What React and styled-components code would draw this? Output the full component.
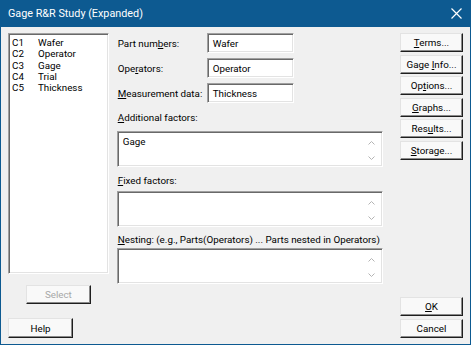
import React from "react";
import styled, { createGlobalStyle } from "styled-components";

const Global = createGlobalStyle`
  html, body {
    margin: 0;
    padding: 0;
    background: #f0f0f0;
  }
  * {
    box-sizing: border-box;
  }
`;

const Window = styled.div`
  width: 471px;
  height: 345px;
  border: 1px solid #0d5a91;
  border-top: none;
  background: #f0f0f0;
  display: flex;
  flex-direction: column;
  font-family: Roboto, "Noto Sans", "Liberation Sans", sans-serif;
  font-size: 9.8px;
  color: #000;
  overflow: hidden;
`;

const TitleBar = styled.div`
  height: 27px;
  margin: 0 -1px;
  background: #0d5a91;
  color: #fff;
  display: flex;
  align-items: center;
  justify-content: space-between;
  padding: 0 9px 0 8px;
  font-size: 10.8px;
`;

const Body = styled.div`
  flex: 1;
  display: flex;
  padding: 6px 7px 6px 7px;
`;

const LeftCol = styled.div`
  width: 101px;
  display: flex;
  flex-direction: column;
`;

const MidCol = styled.div`
  width: 267px;
  margin-left: 8px;
  display: flex;
  flex-direction: column;
`;

const RightCol = styled.div`
  width: 63px;
  margin-left: 17px;
  display: flex;
  flex-direction: column;
  gap: 2.6px;
`;

const Sunken = styled.div`
  background: #fff;
  border: 1px solid;
  border-color: #a0a0a0 #ffffff #ffffff #a0a0a0;
  box-shadow: inset 1px 1px 0 #696969, inset -1px -1px 0 #e3e3e3;
`;

const ListBox = styled(Sunken)`
  height: 241px;
  padding: 3px 0 0 3px;
  line-height: 11.3px;
`;

const ListItem = styled.div`
  display: flex;
  white-space: nowrap;
`;

const ColId = styled.span`
  width: 26px;
`;

const Button = styled.div`
  width: ${(p) => p.$w || 63}px;
  height: ${(p) => p.$h || 19}px;
  background: #f9f9f9;
  border: 1px solid;
  border-color: #e3e3e3 #1e1e1e #1e1e1e #e3e3e3;
  box-shadow: inset -1px -1px 0 #8a8a8a;
  display: flex;
  align-items: center;
  justify-content: center;
  white-space: nowrap;
  color: ${(p) => (p.$disabled ? "#a8a8a8" : "#000")};
  align-self: ${(p) => p.$align || "auto"};
  margin-top: ${(p) => p.$mt || 0}px;
`;

const Key = styled.span`
  text-decoration: underline;
  text-underline-offset: 1px;
`;

const Spacer = styled.div`
  flex: 1;
`;

const FieldRow = styled.div`
  height: 20px;
  display: flex;
  align-items: center;
  margin-bottom: ${(p) => (p.$last ? 0 : 5)}px;
`;

const FieldLabel = styled.div`
  width: 90px;
  padding-left: 1px;
  white-space: nowrap;
`;

const Field = styled(Sunken)`
  width: 87px;
  height: 20px;
  padding: 0 5px;
  display: flex;
  align-items: center;
  white-space: nowrap;
`;

const AreaLabel = styled.div`
  line-height: 14px;
  height: 14px;
  padding-left: 1px;
  white-space: nowrap;
  margin-top: ${(p) => p.$top}px;
  margin-bottom: ${(p) => p.$bottom}px;
`;

const Area = styled(Sunken)`
  height: 36px;
  display: flex;
  justify-content: space-between;
  padding: 4px 0 0 5px;
`;

const Scroll = styled.div`
  width: 14px;
  display: flex;
  flex-direction: column;
  justify-content: space-between;
  align-items: center;
  padding: 5px 0 6px;
  margin-right: 4px;
`;

const Chevron = ({ down }) => (
  <svg width="7" height="4" viewBox="0 0 7 4">
    <path
      d={down ? "M0.5 0.5 L3.5 3.5 L6.5 0.5" : "M0.5 3.5 L3.5 0.5 L6.5 3.5"}
      fill="none"
      stroke="#b4b4b4"
      strokeWidth="1"
    />
  </svg>
);

const CloseIcon = () => (
  <svg width="11" height="11" viewBox="0 0 11 11">
    <path d="M0.5 0.5 L10.5 10.5 M10.5 0.5 L0.5 10.5" stroke="#fff" strokeWidth="1.2" />
  </svg>
);

const columns = [
  ["C1", "Wafer"],
  ["C2", "Operator"],
  ["C3", "Gage"],
  ["C4", "Trial"],
  ["C5", "Thickness"],
];

function TextArea({ children }) {
  return (
    <Area>
      <div>{children}</div>
      <Scroll>
        <Chevron />
        <Chevron down />
      </Scroll>
    </Area>
  );
}

export default function App() {
  return (
    <>
      <Global />
      <Window>
        <TitleBar>
          <span>Gage R&amp;R Study (Expanded)</span>
          <CloseIcon />
        </TitleBar>
        <Body>
          <LeftCol>
            <ListBox>
              {columns.map(([id, name]) => (
                <ListItem key={id}>
                  <ColId>{id}</ColId>
                  <span>{name}</span>
                </ListItem>
              ))}
            </ListBox>
            <Button $w={65} $disabled $align="center" $mt={11}>
              Select
            </Button>
            <Spacer />
            <Button $w={65} $h={20}>
              Help
            </Button>
          </LeftCol>

          <MidCol>
            <FieldRow>
              <FieldLabel>
                Part num<Key>b</Key>ers:
              </FieldLabel>
              <Field>Wafer</Field>
            </FieldRow>
            <FieldRow>
              <FieldLabel>
                Ope<Key>r</Key>ators:
              </FieldLabel>
              <Field>Operator</Field>
            </FieldRow>
            <FieldRow $last>
              <FieldLabel>
                <Key>M</Key>easurement data:
              </FieldLabel>
              <Field>Thickness</Field>
            </FieldRow>

            <AreaLabel $top={8} $bottom={6}>
              <Key>A</Key>dditional factors:
            </AreaLabel>
            <TextArea>Gage</TextArea>

            <AreaLabel $top={7} $bottom={3}>
              <Key>F</Key>ixed factors:
            </AreaLabel>
            <TextArea />

            <AreaLabel $top={6} $bottom={1}>
              <Key>N</Key>esting: (e.g., Parts(Operators) ... Parts nested in Operators)
            </AreaLabel>
            <TextArea />
          </MidCol>

          <RightCol>
            <Button>
              <span>
                <Key>T</Key>erms...
              </span>
            </Button>
            <Button>
              <span>
                Gage <Key>I</Key>nfo...
              </span>
            </Button>
            <Button>
              <span>
                Op<Key>t</Key>ions...
              </span>
            </Button>
            <Button>
              <span>
                <Key>G</Key>raphs...
              </span>
            </Button>
            <Button>
              <span>
                Res<Key>u</Key>lts...
              </span>
            </Button>
            <Button>
              <span>
                <Key>S</Key>torage...
              </span>
            </Button>
            <Spacer />
            <Button>
              <span>
                <Key>O</Key>K
              </span>
            </Button>
            <Button>Cancel</Button>
          </RightCol>
        </Body>
      </Window>
    </>
  );
}
